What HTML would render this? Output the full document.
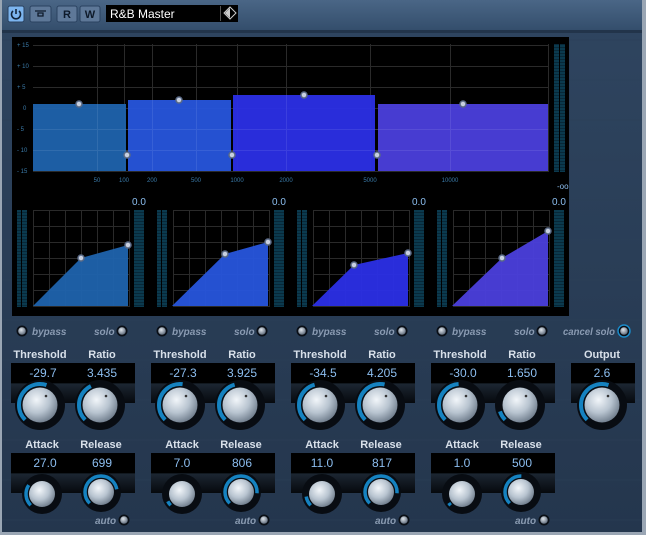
<!DOCTYPE html>
<html><head><meta charset="utf-8"><style>
html,body{margin:0;padding:0;background:#2a3c54;}
svg{display:block}
text{font-family:"Liberation Sans",sans-serif}
.lbl{font-size:11px;font-weight:bold;fill:#d8e0ea}
.val{font-size:12px;fill:#8cbef0}
.sm{font-size:10px;font-weight:bold;font-style:italic;fill:#8a9bb2}
.ax{font-size:6px;fill:#3a7aa8}
</style></head><body>
<svg width="646" height="535" viewBox="0 0 646 535" xmlns="http://www.w3.org/2000/svg">
<defs>
<linearGradient id="bg" x1="0" y1="0" x2="0" y2="1"><stop offset="0" stop-color="#2f4560"/><stop offset="1" stop-color="#24364d"/></linearGradient>
<linearGradient id="top" x1="0" y1="0" x2="0" y2="1"><stop offset="0" stop-color="#4a6686"/><stop offset="1" stop-color="#344e6c"/></linearGradient>
<radialGradient id="kn" cx="0.4" cy="0.35" r="0.75"><stop offset="0" stop-color="#f2f6fa"/><stop offset="0.5" stop-color="#b8c4d0"/><stop offset="1" stop-color="#5e6c7c"/></radialGradient>
<radialGradient id="btn" cx="0.4" cy="0.35" r="0.7"><stop offset="0" stop-color="#e0e6ec"/><stop offset="1" stop-color="#5a6676"/></radialGradient>
<linearGradient id="box" x1="0" y1="0" x2="0" y2="1"><stop offset="0" stop-color="#000"/><stop offset="0.5" stop-color="#000"/><stop offset="0.52" stop-color="#1c2632"/><stop offset="1" stop-color="#06090d"/></linearGradient>
<pattern id="meter" width="4" height="3" patternUnits="userSpaceOnUse"><rect width="4" height="3" fill="#0b3a4e"/><rect y="2" width="4" height="1" fill="#082838"/></pattern>
</defs>
<rect width="646" height="535" fill="url(#bg)"/>
<g stroke="#2c4058" stroke-width="1" opacity="0.5">
<path d="M0 40H646M0 80H646M0 120H646M0 160H646M0 200H646M0 240H646M0 280H646M0 320H646M0 360H646M0 400H646M0 440H646M0 480H646M0 520H646"/>
</g>
<rect x="0" y="0" width="646" height="30" fill="url(#top)"/>
<rect x="0" y="30" width="646" height="3" fill="#22344a"/>
<rect x="0" y="0" width="2" height="535" fill="#9aa6b4"/>
<rect x="642" y="0" width="4" height="535" fill="#9aa6b4"/>
<rect x="0" y="532" width="646" height="3" fill="#9aa6b4"/>
<!-- toolbar -->
<rect x="8" y="6" width="16" height="16" rx="2" fill="#7cb4ee" stroke="#2a4260"/>
<path d="M13 11 A4.5 4.5 0 1 0 19 11" fill="none" stroke="#12243a" stroke-width="1.6"/><path d="M16 9V14" stroke="#12243a" stroke-width="1.6"/>
<rect x="30" y="6" width="21" height="16" rx="2" fill="#5e7898" stroke="#2a4260"/>
<path d="M35 11H46M38 13H43V16H38Z" fill="none" stroke="#0e1a2a" stroke-width="1.3"/>
<rect x="57" y="6" width="20" height="16" rx="2" fill="#5e7898" stroke="#2a4260"/>
<text x="67" y="18" text-anchor="middle" style="font-size:11px;font-weight:bold;fill:#0e1a2a">R</text>
<rect x="80" y="6" width="20" height="16" rx="2" fill="#5e7898" stroke="#2a4260"/>
<text x="90" y="18" text-anchor="middle" style="font-size:11px;font-weight:bold;fill:#0e1a2a">W</text>
<rect x="106" y="5" width="132" height="17" fill="#000"/>
<rect x="220" y="6" width="1" height="15" fill="#555"/>
<text x="110" y="18" style="font-size:12px;fill:#fff">R&amp;B Master</text>
<path d="M230 7L236 13L230 19L224 13Z" fill="none" stroke="#ccc"/><path d="M230 8L225 13L230 18Z" fill="#ccc"/>
<!-- black panel -->
<rect x="12" y="37" width="557" height="279" fill="#000"/>
<g stroke="#2a2a2a" stroke-width="1">
<path d="M33 45.5H548M33 66.5H548M33 87.5H548M33 108.5H548M33 129.5H548M33 150.5H548M33 171.5H548"/>
<path d="M97.5 44V172M124.5 44V172M152.5 44V172M196.5 44V172M237.5 44V172M286.5 44V172M370.5 44V172M450.5 44V172M548.5 44V172"/>
</g>
<g class="ax">
<text x="17" y="47">+ 15</text><text x="17" y="68">+ 10</text><text x="17" y="89">+ 5</text><text x="23" y="110">0</text><text x="17" y="131">- 5</text><text x="17" y="152">- 10</text><text x="17" y="173">- 15</text>
<text x="97" y="182" text-anchor="middle">50</text><text x="124" y="182" text-anchor="middle">100</text><text x="152" y="182" text-anchor="middle">200</text><text x="196" y="182" text-anchor="middle">500</text><text x="237" y="182" text-anchor="middle">1000</text><text x="286" y="182" text-anchor="middle">2000</text><text x="370" y="182" text-anchor="middle">5000</text><text x="450" y="182" text-anchor="middle">10000</text>
</g>
<rect x="33" y="104" width="93" height="67" fill="#1f63ad" opacity="0.95"/>
<rect x="128" y="100" width="103" height="71" fill="#2755dc" opacity="0.95"/>
<rect x="233" y="95" width="142" height="76" fill="#2b2fe6" opacity="0.95"/>
<rect x="378" y="104" width="170" height="67" fill="#4b3fdc" opacity="0.95"/>
<g stroke="#ffffff" stroke-opacity="0.08"><path d="M33 129.5H548M33 150.5H548M97.5 104V171M152.5 100V171M196.5 100V171M286.5 95V171M450.5 104V171"/></g>
<g fill="#c8d0e0" stroke="#5a6a86" stroke-width="1.5">
<circle cx="79" cy="104" r="3"/><circle cx="179" cy="100" r="3"/><circle cx="304" cy="95" r="3"/><circle cx="463" cy="104" r="3"/>
<circle cx="127" cy="155" r="3"/><circle cx="232" cy="155" r="3"/><circle cx="377" cy="155" r="3"/>
</g>
<rect x="554" y="44" width="11" height="128" fill="url(#meter)"/><rect x="559" y="44" width="1" height="128" fill="#000"/>
<text x="557" y="189" style="font-size:8px;fill:#8cbef0">-oo</text>
<g id="cg">
<rect x="17" y="210" width="10" height="97" fill="url(#meter)"/><rect x="21" y="210" width="1" height="97" fill="#000"/>
<rect x="134" y="210" width="10" height="97" fill="url(#meter)"/>
<g stroke="#2a2a2a"><path d="M33 210.5H129M33 226.5H129M33 242.5H129M33 258.5H129M33 274.5H129M33 290.5H129M33 306.5H129M33.5 210V307M49.5 210V307M65.5 210V307M81.5 210V307M97.5 210V307M113.5 210V307M129.5 210V307"/></g>
</g>
<use href="#cg" x="140"/><use href="#cg" x="280"/><use href="#cg" x="420"/>
<path d="M33 306L81 258L128 245V306Z" fill="#1f63ad" opacity="0.95"/>
<path d="M172 306L225 254L268 242V306Z" fill="#2755dc" opacity="0.95"/>
<path d="M312 306L354 265L408 253V306Z" fill="#2b2fe6" opacity="0.95"/>
<path d="M452 306L502 258L548 231V306Z" fill="#4b3fdc" opacity="0.95"/>
<g fill="#c8d0e0" stroke="#5a6a86" stroke-width="1.5">
<circle cx="81" cy="258" r="3"/><circle cx="128" cy="245" r="3"/><circle cx="225" cy="254" r="3"/><circle cx="268" cy="242" r="3"/>
<circle cx="354" cy="265" r="3"/><circle cx="408" cy="253" r="3"/><circle cx="502" cy="258" r="3"/><circle cx="548" cy="231" r="3"/>
</g>
<g style="font-size:10px;fill:#8cbef0"><text x="132" y="205">0.0</text><text x="272" y="205">0.0</text><text x="412" y="205">0.0</text><text x="552" y="205">0.0</text></g>
<defs>
<g id="ctl">
<circle cx="22" cy="331" r="5.5" fill="#0a0f16"/><circle cx="22" cy="331" r="3.8" fill="url(#btn)"/>
<text x="32" y="335" class="sm">bypass</text>
<text x="94" y="335" class="sm">solo</text>
<circle cx="122" cy="331" r="5.5" fill="#0a0f16"/><circle cx="122" cy="331" r="3.8" fill="url(#btn)"/>
<text x="40" y="358" class="lbl" text-anchor="middle">Threshold</text>
<text x="102" y="358" class="lbl" text-anchor="middle">Ratio</text>
<rect x="11" y="363" width="124" height="40" fill="url(#box)"/>
<text x="42" y="448" class="lbl" text-anchor="middle">Attack</text>
<text x="101" y="448" class="lbl" text-anchor="middle">Release</text>
<rect x="11" y="453" width="124" height="40" fill="url(#box)"/>
<text x="95" y="524" class="sm">auto</text>
<circle cx="124" cy="520" r="5.5" fill="#0a0f16"/><circle cx="124" cy="520" r="3.8" fill="url(#btn)"/>
</g>
<g id="kb"><circle r="25" fill="#080c12" stroke="none"/><circle r="17.5" fill="url(#kn)" stroke="none"/><circle cx="6" cy="-9" r="1.3" fill="#333" stroke="none"/></g>
<g id="ks"><circle r="20" fill="#080c12" stroke="none"/><circle r="13" fill="url(#kn)" stroke="none"/></g>
</defs>
<use href="#ctl"/><use href="#ctl" x="140"/><use href="#ctl" x="280"/><use href="#ctl" x="420"/>
<text x="563" y="335" class="sm" textLength="52" lengthAdjust="spacingAndGlyphs">cancel solo</text>
<circle cx="624" cy="331" r="6" fill="#0a0f16" stroke="#1a8ac8" stroke-width="1.5"/><circle cx="624" cy="331" r="3.8" fill="url(#btn)"/>
<text x="602" y="358" class="lbl" text-anchor="middle">Output</text>
<rect x="571" y="363" width="64" height="40" fill="url(#box)"/>
<g class="val" text-anchor="middle">
<text x="43" y="377">-29.7</text><text x="102" y="377">3.435</text><text x="45" y="467">27.0</text><text x="102" y="467">699</text>
<text x="183" y="377">-27.3</text><text x="242" y="377">3.925</text><text x="182" y="467">7.0</text><text x="242" y="467">806</text>
<text x="323" y="377">-34.5</text><text x="382" y="377">4.205</text><text x="322" y="467">11.0</text><text x="382" y="467">817</text>
<text x="463" y="377">-30.0</text><text x="522" y="377">1.650</text><text x="462" y="467">1.0</text><text x="522" y="467">500</text>
<text x="602" y="377">2.6</text>
</g>
<g transform="translate(40,405)"><use href="#kb"/><circle r="21" fill="none" stroke="#1582c0" stroke-width="4" stroke-dasharray="56 200" transform="rotate(135)"/></g>
<g transform="translate(100,405)"><use href="#kb"/><circle r="21" fill="none" stroke="#1582c0" stroke-width="4" stroke-dasharray="40 200" transform="rotate(135)"/></g>
<g transform="translate(180,405)"><use href="#kb"/><circle r="21" fill="none" stroke="#1582c0" stroke-width="4" stroke-dasharray="52 200" transform="rotate(135)"/></g>
<g transform="translate(240,405)"><use href="#kb"/><circle r="21" fill="none" stroke="#1582c0" stroke-width="4" stroke-dasharray="44 200" transform="rotate(135)"/></g>
<g transform="translate(320,405)"><use href="#kb"/><circle r="21" fill="none" stroke="#1582c0" stroke-width="4" stroke-dasharray="44 200" transform="rotate(135)"/></g>
<g transform="translate(380,405)"><use href="#kb"/><circle r="21" fill="none" stroke="#1582c0" stroke-width="4" stroke-dasharray="54 200" transform="rotate(135)"/></g>
<g transform="translate(460,405)"><use href="#kb"/><circle r="21" fill="none" stroke="#1582c0" stroke-width="4" stroke-dasharray="48 200" transform="rotate(135)"/></g>
<g transform="translate(520,405)"><use href="#kb"/><circle r="21" fill="none" stroke="#1582c0" stroke-width="4" stroke-dasharray="10 200" transform="rotate(135)"/></g>
<g transform="translate(602,405)"><use href="#kb"/><circle r="21" fill="none" stroke="#1582c0" stroke-width="4" stroke-dasharray="56 200" transform="rotate(135)"/></g>
<g transform="translate(42,494)"><use href="#ks"/><circle r="16" fill="none" stroke="#1582c0" stroke-width="3.5" stroke-dasharray="22 200" transform="rotate(135)"/></g>
<g transform="translate(101,492)"><use href="#ks"/><circle r="16" fill="none" stroke="#1582c0" stroke-width="3.5" stroke-dasharray="60 200" transform="rotate(135)"/></g>
<g transform="translate(182,494)"><use href="#ks"/><circle r="16" fill="none" stroke="#1582c0" stroke-width="3.5" stroke-dasharray="5 200" transform="rotate(135)"/></g>
<g transform="translate(241,492)"><use href="#ks"/><circle r="16" fill="none" stroke="#1582c0" stroke-width="3.5" stroke-dasharray="64 200" transform="rotate(135)"/></g>
<g transform="translate(322,494)"><use href="#ks"/><circle r="16" fill="none" stroke="#1582c0" stroke-width="3.5" stroke-dasharray="10 200" transform="rotate(135)"/></g>
<g transform="translate(381,492)"><use href="#ks"/><circle r="16" fill="none" stroke="#1582c0" stroke-width="3.5" stroke-dasharray="64 200" transform="rotate(135)"/></g>
<g transform="translate(462,494)"><use href="#ks"/><circle r="16" fill="none" stroke="#1582c0" stroke-width="3.5" stroke-dasharray="3 200" transform="rotate(135)"/></g>
<g transform="translate(521,492)"><use href="#ks"/><circle r="16" fill="none" stroke="#1582c0" stroke-width="3.5" stroke-dasharray="38 200" transform="rotate(135)"/></g>
</svg>
</body></html>
